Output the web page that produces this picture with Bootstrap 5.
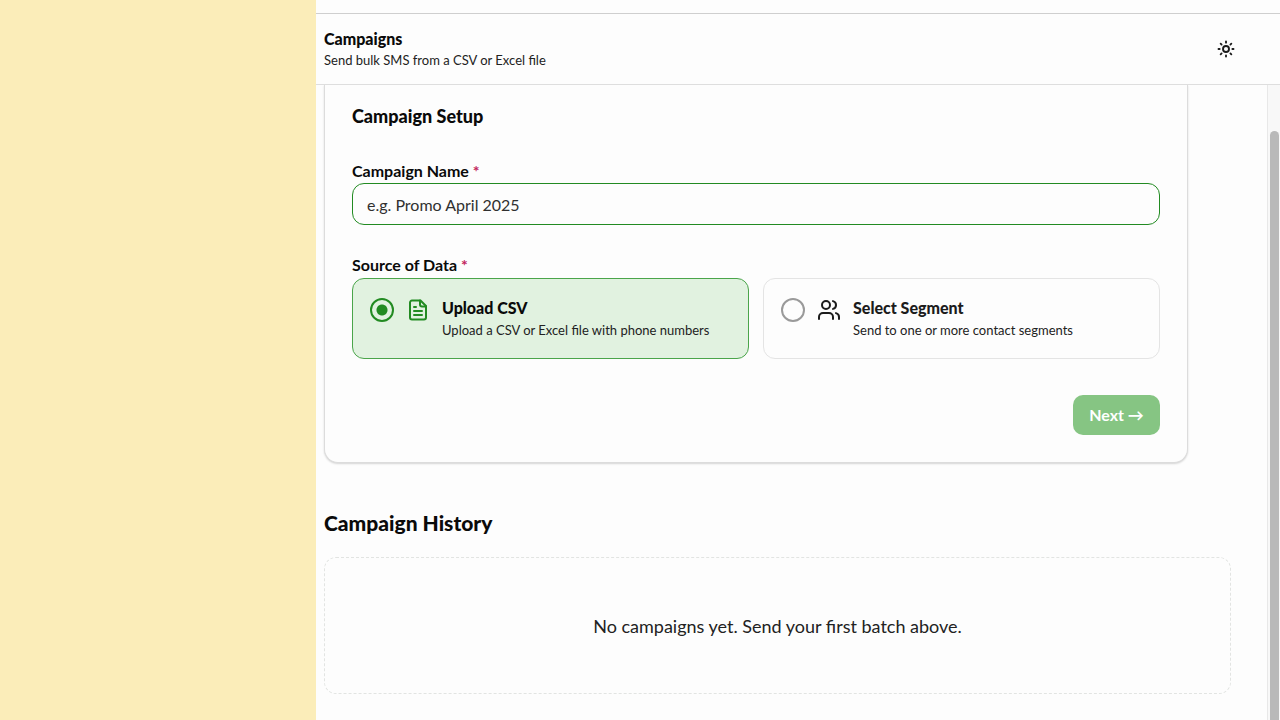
<!DOCTYPE html>
<html lang="en">
<head>
<meta charset="utf-8">
<meta name="viewport" content="width=device-width, initial-scale=1">
<title>Campaigns</title>
<link href="https://cdn.jsdelivr.net/npm/bootstrap@5.3.0/dist/css/bootstrap.min.css" rel="stylesheet">
<style>
  :root { --green: #228b22; --line: #e4e4e4; --page: #fdfdfd; }
  body { font-family: Lato, "Open Sans", sans-serif; font-size: 16px; line-height: 24px; color: #0a0a0a; background: var(--page); }
  h1, h2, p { margin: 0; }
  .side-panel { width: 316px; background: #fbedb9; }
  .top-strip { height: 14px; border-bottom: 1px solid #cfcfcf; }
  .page-header { height: 71px; padding: 0 40px 0 8px; border-bottom: 1px solid #dedede; }
  .page-title { font-size: 16px; line-height: 22px; font-weight: 900; }
  .hint { font-size: 13px; line-height: 21px; color: #222; }
  .theme-btn { width: 28px; height: 28px; color: #1c1c1c; }
  .content-area { padding: 0 36px 24px 8px; }
  .setup-card { max-width: 864px; padding: 19px 27px 27px; background: var(--page); border: 1px solid #dcdcdc; border-top: 0; border-radius: 0 0 14px 14px; box-shadow: 0 1px 2px rgba(0,0,0,.16); }
  .section-title { font-size: 18px; line-height: 24px; font-weight: 900; }
  .field-label { display: block; font-size: 16px; line-height: 24px; font-weight: 700; margin: 0; }
  .name-field { padding-top: 31px; }
  .source-field { padding-top: 28px; }
  .source-field .field-label { margin-bottom: 1px; }
  .form-actions { padding-top: 36px; }
  .star { color: #c2255c; }
  .name-input { height: 42px; padding: 0 14px; border: 1px solid var(--green); border-radius: 12px; background: var(--page); font-size: 16px; color: #222; }
  .name-input::placeholder { color: #303030; opacity: 1; }
  .name-input:focus { border-color: var(--green); box-shadow: none; background: var(--page); }
  .option-grid { gap: 14px; }
  .option-box { height: 81px; padding: 17px; gap: 12px; border: 1px solid var(--line); border-radius: 12px; cursor: pointer; color: #1c1c1c; }
  .option-box.is-chosen { border-color: #4aa54a; background: #e1f2e0; color: #0a0a0a; }
  .option-box .option-radio { appearance: none; flex: none; width: 24px; height: 24px; margin: 2px 0 0; border: 2px solid #9a9a9a; border-radius: 50%; background: transparent; }
  .option-box .option-radio:checked { border-color: var(--green); background: radial-gradient(circle, var(--green) 5px, transparent 6px); }
  .option-icon { flex: none; width: 24px; height: 24px; margin-top: 2px; color: #1c1c1c; }
  .is-chosen .option-icon { color: var(--green); }
  .option-title { font-size: 16px; line-height: 24px; font-weight: 900; }
  .next-btn { width: 87px; height: 40px; padding: 0; border: 0; border-radius: 10px; background: #86c583; color: #fff; font-size: 16px; font-weight: 700; }
  .next-btn:disabled { background: #86c583; color: #fff; opacity: 1; }
  .history-section { padding-top: 46px; }
  .history-title { font-size: 21px; line-height: 28px; font-weight: 900; margin-bottom: 20px; }
  .empty-box { height: 137px; border: 1px dashed #e2e4e2; border-radius: 12px; font-size: 18px; color: #222; }
  .scroll-track { width: 13px; padding: 46px 1px 0 2px; background: #f8f8f8; border-left: 1px solid #e8e8e8; }
  .scroll-thumb { background: #b9b9b9; border-radius: 5px 5px 0 0; }
</style>
</head>
<body>
<div class="d-flex vh-100 overflow-hidden">
  <aside class="side-panel flex-shrink-0"></aside>
  <div class="d-flex flex-column flex-grow-1">
    <div class="top-strip flex-shrink-0"></div>
    <header class="page-header d-flex flex-shrink-0 align-items-center justify-content-between">
      <div>
        <h1 class="page-title">Campaigns</h1>
        <p class="hint">Send bulk SMS from a CSV or Excel file</p>
      </div>
      <button type="button" class="theme-btn btn p-0 border-0 d-flex align-items-center justify-content-center" aria-label="Switch theme">
        <svg width="18" height="18" viewBox="0 0 24 24" fill="none" stroke="currentColor" stroke-width="2.5" stroke-linecap="round"><circle cx="12" cy="12" r="4"/><path d="M12 2v1.500M12 20.500v1.500M4.900 4.900l1.200 1.200M17.900 17.900l1.200 1.200M2 12h1.500M20.500 12H22M6.100 17.900l-1.200 1.200M19.100 4.900l-1.200 1.200"/></svg>
      </button>
    </header>
    <div class="d-flex flex-grow-1 overflow-hidden">
      <main class="content-area flex-grow-1">
        <form class="setup-card">
          <h2 class="section-title">Campaign Setup</h2>
          <div class="name-field">
            <label class="field-label" for="campaignName">Campaign Name <span class="star">*</span></label>
            <input type="text" id="campaignName" class="name-input form-control" placeholder="e.g. Promo April 2025">
          </div>
          <fieldset class="source-field">
            <legend class="field-label">Source of Data <span class="star">*</span></legend>
            <div class="option-grid d-flex">
              <label class="option-box is-chosen d-flex flex-fill w-50" for="sourceCsv">
                <input type="radio" name="source" id="sourceCsv" class="option-radio" checked>
                <svg class="option-icon" viewBox="0 0 24 24" fill="none" stroke="currentColor" stroke-width="2" stroke-linecap="round" stroke-linejoin="round"><path d="M14.500 2.500H6a2 2 0 0 0-2 2v15a2 2 0 0 0 2 2h12a2 2 0 0 0 2-2V8z"/><path d="M14 2.500V6.500a2 2 0 0 0 2 2h4M8 9h2M8 13h8M8 17h8"/></svg>
                <span>
                  <span class="option-title d-block">Upload CSV</span>
                  <span class="hint d-block">Upload a CSV or Excel file with phone numbers</span>
                </span>
              </label>
              <label class="option-box d-flex flex-fill w-50" for="sourceSegment">
                <input type="radio" name="source" id="sourceSegment" class="option-radio">
                <svg class="option-icon" viewBox="0 0 24 24" fill="none" stroke="currentColor" stroke-width="2" stroke-linecap="round" stroke-linejoin="round"><path d="M16 21v-2a4 4 0 0 0-4-4H6a4 4 0 0 0-4 4v2"/><circle cx="9" cy="7" r="4"/><path d="M22 21v-2a4 4 0 0 0-3-3.870M16 3.130a4 4 0 0 1 0 7.750"/></svg>
                <span>
                  <span class="option-title d-block">Select Segment</span>
                  <span class="hint d-block">Send to one or more contact segments</span>
                </span>
              </label>
            </div>
          </fieldset>
          <div class="form-actions d-flex justify-content-end">
            <button type="submit" class="next-btn btn" disabled>Next →</button>
          </div>
        </form>
        <section class="history-section">
          <h2 class="history-title">Campaign History</h2>
          <div class="empty-box d-flex align-items-center justify-content-center">No campaigns yet. Send your first batch above.</div>
        </section>
      </main>
      <div class="scroll-track d-flex flex-shrink-0" aria-hidden="true"><div class="scroll-thumb flex-grow-1"></div></div>
    </div>
  </div>
</div>
<script src="https://cdn.jsdelivr.net/npm/bootstrap@5.3.0/dist/js/bootstrap.bundle.min.js"></script>
</body>
</html>
